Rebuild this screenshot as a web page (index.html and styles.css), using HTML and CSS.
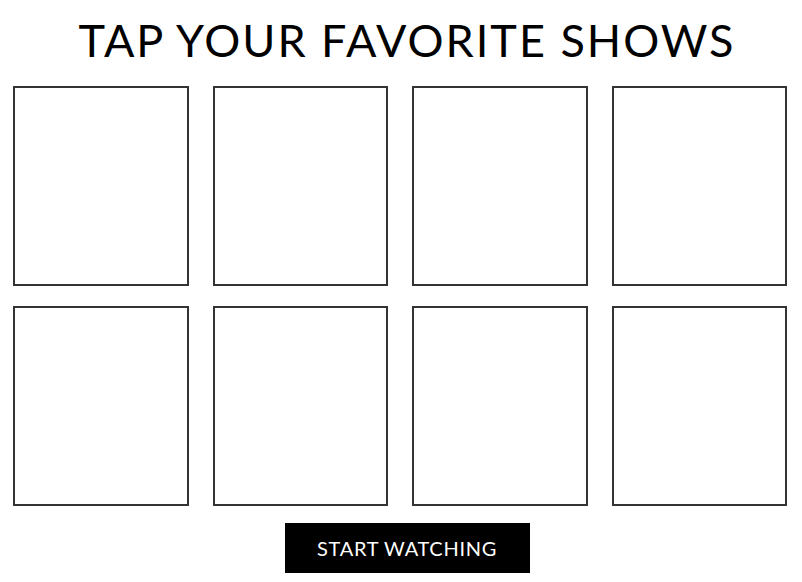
FILE: index.html
```html
<!DOCTYPE html>
<html lang="en">
<head>
    <meta charset="UTF-8">
    <meta name="viewport" content="width=device-width, initial-scale=1.0">
    <title>Pick Shows</title>
    <link rel="stylesheet" href="styles.css">
</head>
<body>
    <div class="page">
        <h1 class="title">TAP YOUR FAVORITE SHOWS</h1>
        <div class="shows">
            <div class="show"></div>
            <div class="show"></div>
            <div class="show"></div>
            <div class="show"></div>
            <div class="show"></div>
            <div class="show"></div>
            <div class="show"></div>
            <div class="show"></div>
        </div>
        <div class="actions">
            <button type="button" class="btn">START WATCHING</button>
        </div>
    </div>
</body>
</html>
```

FILE: styles.css
```css
body {
    font-family: Lato, "Noto Sans", sans-serif;
    background-color: #fff;
    color: #000;
    margin: 0;
    padding: 0;
}
.page {
    width: 774px;
    margin-left: 13px;
    padding-top: 13px;
}
.title {
    margin: 0;
    padding-left: 14px;
    font-size: 45px;
    font-weight: 400;
    letter-spacing: 2px;
    line-height: 54px;
    text-align: center;
}
.shows {
    margin-top: 19px;
    display: grid;
    grid-template-columns: repeat(4, 1fr);
    column-gap: 24px;
    row-gap: 20px;
}
.show {
    height: 200px;
    border: 2px solid #333;
    box-sizing: border-box;
}
.actions {
    margin-top: 17px;
    padding-left: 14px;
    display: flex;
    justify-content: center;
}
.btn {
    width: 245px;
    height: 50px;
    background-color: #000;
    color: #fff;
    border: none;
    font-family: inherit;
    font-size: 20px;
    letter-spacing: 0.7px;
    cursor: pointer;
}
```
